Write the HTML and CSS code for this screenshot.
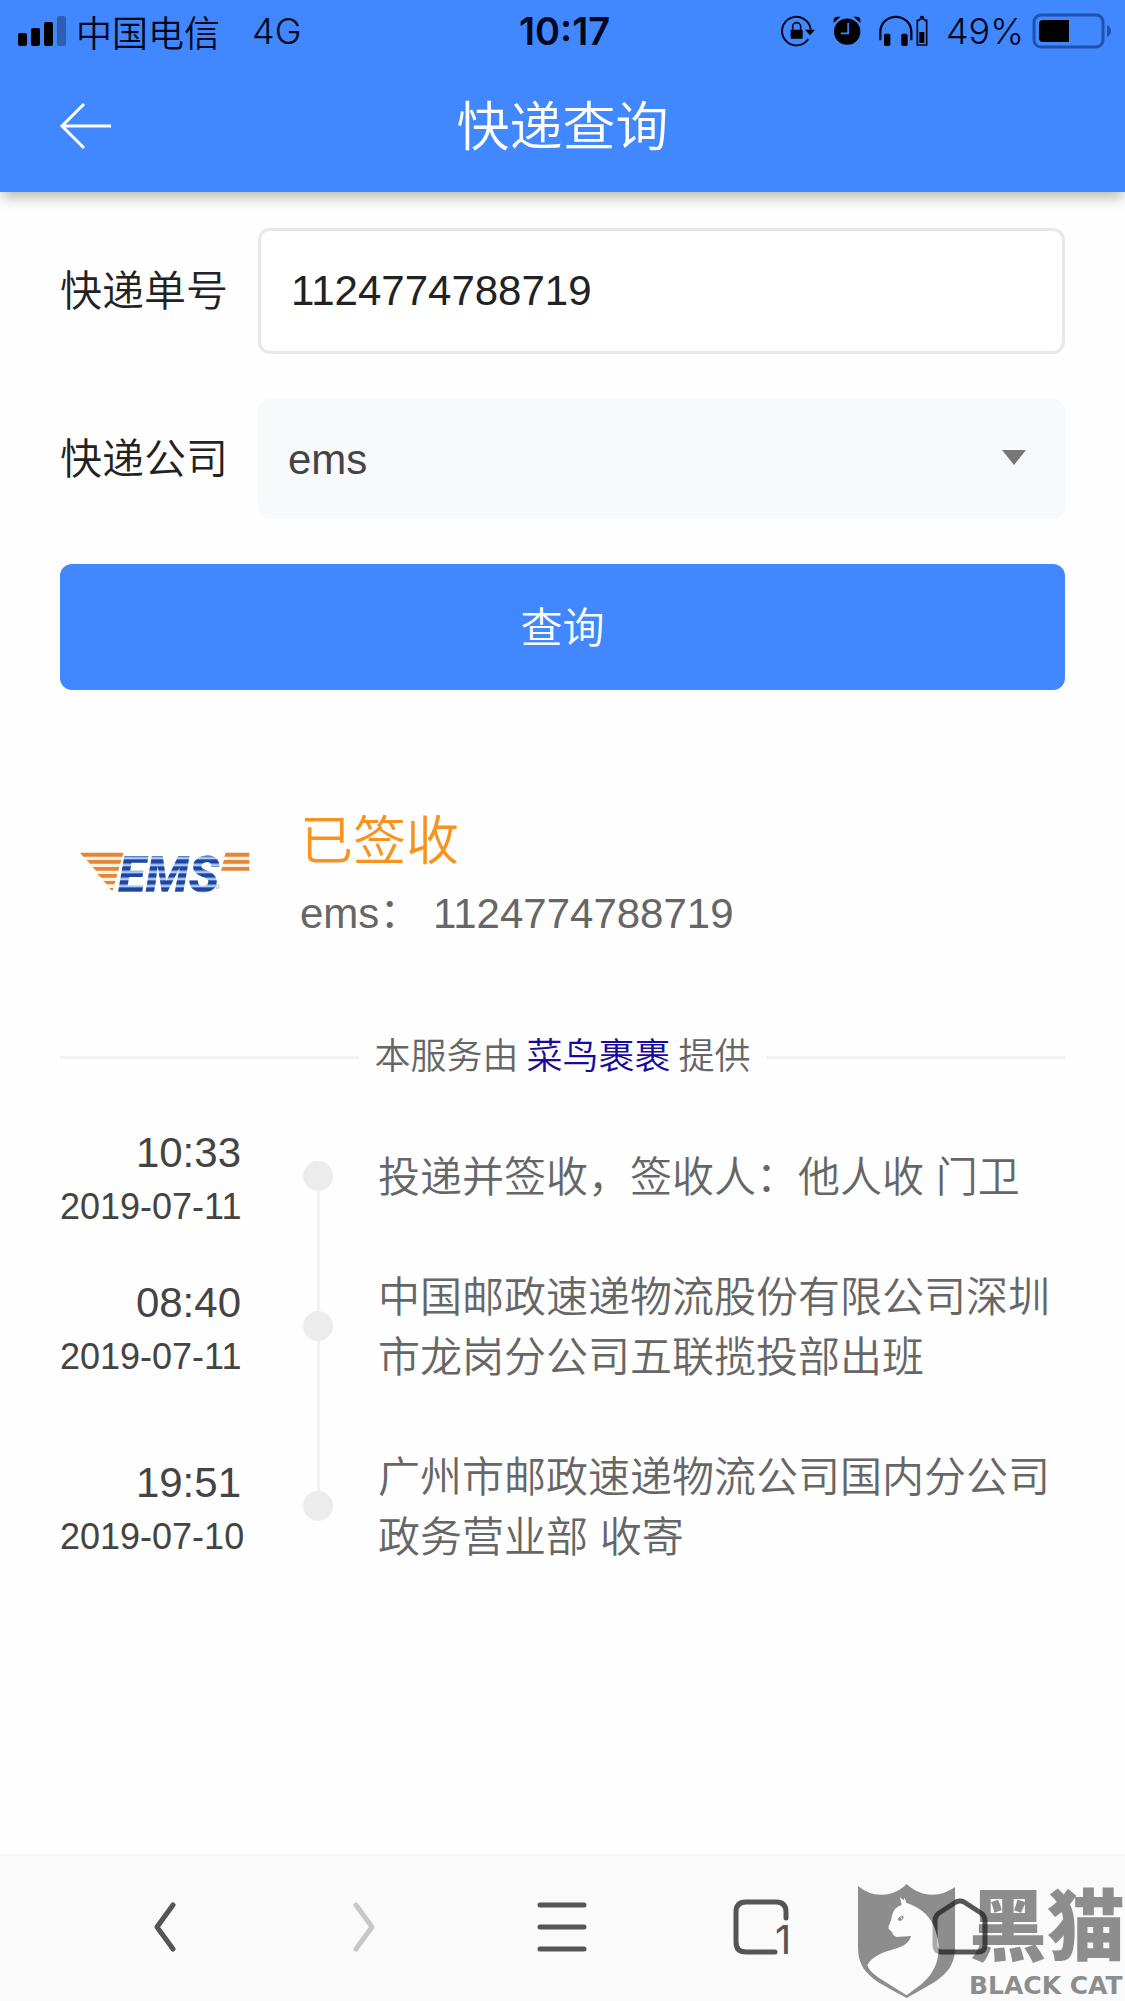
FILE: index.html
```html
<!DOCTYPE html>
<html lang="zh-CN">
<head>
    <meta charset="UTF-8">
    <meta name="viewport" content="width=device-width, initial-scale=1.0">
    <title>快递查询</title>
    <link rel="stylesheet" href="styles.css">
</head>
<body>
<header class="header">
    <div class="status">
        <div class="status-left">
            <svg width="48" height="30" viewBox="0 0 48 30">
                <rect x="0" y="17" width="9" height="13" rx="2"/>
                <rect x="13" y="12" width="9" height="18" rx="2"/>
                <rect x="26" y="6" width="9" height="24" rx="2"/>
                <rect x="39" y="0" width="9" height="30" rx="2" opacity="0.3"/>
            </svg>
            <span class="carrier">中国电信</span>
            <span class="network">4G</span>
        </div>
        <div class="clock">10:17</div>
        <div class="status-right">
            <!-- rotation lock -->
            <svg width="34" height="32" viewBox="115 42 102 96">
                <path d="M197 114A43 43 0 1 1 204 86" fill="none" stroke="#000820" stroke-width="6"/>
                <path d="M187 86h30l-15 17z"/>
                <rect x="144" y="86" width="36" height="27" rx="3"/>
                <path d="M150 88V77a12 12 0 0 1 24 0v11" fill="none" stroke="#000820" stroke-width="5"/>
            </svg>
            <!-- alarm -->
            <svg width="28" height="32" viewBox="278 42 85 96">
                <circle cx="321" cy="92" r="40"/>
                <path d="M280 66v-12q2-6 9-7h12zM361 66v-12q-2-6-9-7h-12z"/>
                <path d="M324 65v32h-22" fill="none" stroke="#4187ff" stroke-width="5"/>
            </svg>
            <!-- headphones with their own battery -->
            <svg width="49" height="32" viewBox="416 42 147 96">
                <path d="M420 118V92a46 44 0 0 1 93 0v26" fill="none" stroke="#000820" stroke-width="7"/>
                <rect x="431" y="98" width="19" height="37" rx="5"/>
                <rect x="483" y="98" width="19" height="37" rx="5"/>
                <path d="M531 58h5l3-4h12l3 4h5v74h-28z" fill="none" stroke="#000820" stroke-width="5"/>
                <path d="M538 51q1-7 7-7t7 7zM537 93h15v33h-15z"/>
            </svg>
            <div class="power">
                <span>49%</span>
                <svg width="78" height="34" viewBox="0 0 78 34">
                    <rect x="1" y="1" width="69" height="32" rx="7" fill="none" stroke="#1f52ab" stroke-width="3"/>
                    <path d="M74 11q4 2 4 6t-4 6z" fill="#1f52ab"/>
                    <path d="M10 6h26v22h-26q-4 0-4-4v-14q0-4 4-4z"/>
                </svg>
            </div>
        </div>
    </div>
    <div class="titlebar">
        <button type="button" class="back" aria-label="返回">
            <svg width="52" height="50" viewBox="0 0 52 50">
                <path d="M51 25H3M24 3L2 25l22 22" fill="none" stroke="#fff" stroke-width="3"/>
            </svg>
        </button>
        <h1>快递查询</h1>
    </div>
</header>

<main>
    <form class="query">
        <div class="field">
            <label for="number">快递单号</label>
            <input type="text" id="number" value="1124774788719">
        </div>
        <div class="field">
            <label for="company">快递公司</label>
            <div class="select-box">
                <select id="company">
                    <option>ems</option>
                </select>
            </div>
        </div>
        <button type="button" class="search">查询</button>
    </form>

    <section class="result">
        <svg class="logo" width="170" height="42" viewBox="120 214 510 126">
            <defs>
                <pattern id="blue" width="30" height="21" y="218" patternUnits="userSpaceOnUse">
                    <rect width="30" height="21" fill="#a9cbff"/>
                    <rect width="30" height="13" fill="#1f459c"/>
                </pattern>
            </defs>
            <path d="M120 219H250L217 335L205 322z" fill="#fff0e0"/>
            <path d="M558 219H628V273H543z" fill="#fff0e0"/>
            <g fill="#e0883a">
                <path d="M120 219H250L247 231H130zM140 241H244L241 252H150zM158 262H238L235 273H168zM172 283H232L229 294H184zM190 304H226L223 314H201zM208 325H220L217 334z"/>
                <path d="M557 219H628V231H553zM552 241H628V252H548zM547 262H628V273H543z"/>
            </g>
            <text class="logo-text" x="234" y="337" fill="url(#blue)">EMS</text>
            <circle cx="532" cy="321" r="5" fill="none" stroke="#a5acc8" stroke-width="3"/>
        </svg>
        <div>
            <h2>已签收</h2>
            <p>ems： 1124774788719</p>
        </div>
    </section>

    <p class="provider"><span>本服务由<a href="#">菜鸟裹裹</a>提供</span></p>

    <ol class="timeline">
        <li>
            <div class="when"><b>10:33</b><span>2019-07-11</span></div>
            <div class="dot"></div>
            <p>投递并签收，签收人：他人收 门卫</p>
        </li>
        <li>
            <div class="when"><b>08:40</b><span>2019-07-11</span></div>
            <div class="dot"></div>
            <p>中国邮政速递物流股份有限公司深圳市龙岗分公司五联揽投部出班</p>
        </li>
        <li>
            <div class="when"><b>19:51</b><span>2019-07-10</span></div>
            <div class="dot"></div>
            <p>广州市邮政速递物流公司国内分公司政务营业部 收寄</p>
        </li>
    </ol>
</main>

<nav class="toolbar">
    <button type="button" aria-label="后退">
        <svg width="58" height="58" viewBox="0 0 58 58"><path d="M37 7L21 29l16 22" class="line"/></svg>
    </button>
    <button type="button" aria-label="前进" disabled>
        <svg width="58" height="58" viewBox="0 0 58 58"><path d="M21 7l16 22l-16 22" class="line"/></svg>
    </button>
    <button type="button" aria-label="菜单">
        <svg width="58" height="58" viewBox="0 0 58 58"><path d="M7 7h44M7 29h44M7 51h44" class="line"/></svg>
    </button>
    <button type="button" aria-label="窗口">
        <svg width="58" height="58" viewBox="0 0 58 58">
            <path d="M54 20V14Q54 4 44 4H14Q4 4 4 14V44Q4 54 14 54H43" class="line"/>
            <text x="43" y="56" class="tab-count">1</text>
        </svg>
    </button>
    <button type="button" aria-label="主页">
        <svg width="58" height="58" viewBox="0 0 58 58"><path d="M25 4Q29 2 33 4L50 15Q54 18 54 23V47Q54 54 47 54H11Q4 54 4 47V23Q4 18 8 15z" class="line"/></svg>
    </button>
    <div class="watermark">
        <svg width="97" height="114" viewBox="108 109 291 342">
            <path d="M108 115Q150 150 205 138Q235 129 254 109Q275 130 305 138Q355 150 399 118V300C399 385 330 405 254 451C175 405 108 385 108 300z" fill="#222"/>
            <path d="M234 149L245 158L248 150L253 165C290 178 318 197 336 236C360 300 356 360 300 408L254 443L170 390Q140 370 136 352C150 325 185 313 210 306C245 298 262 285 267 265L224 268Q211 264 211 254L200 244Q197 236 203 228Q209 215 211 200Q217 179 239 172z" fill="#fff"/>
            <path d="M227 216Q233 202 245 206Q244 220 232 220z" fill="#222"/>
            <path d="M236 208l4 7" stroke="#fff" stroke-width="3"/>
        </svg>
        <div class="brand"><strong>黑猫</strong><span>BLACK CAT</span></div>
    </div>
</nav>
</body>
</html>
```
FILE: styles.css
```css
* {
    box-sizing: border-box;
}
body {
    margin: 0;
    min-height: 100vh;
    display: flex;
    flex-direction: column;
    background: #fefefe;
    color: #222;
    font-family: "Liberation Sans", "Noto Sans CJK SC", sans-serif;
    font-size: 42px;
    font-weight: 350;
}
h1, h2, p, ol {
    margin: 0;
    padding: 0;
    font-weight: 350;
}
svg {
    display: block;
    flex: none;
    overflow: visible;
}
button {
    border: none;
    padding: 0;
    background: none;
    font: inherit;
}

/* header */
.header {
    background: #4187ff;
    box-shadow: 0 8px 12px -2px rgba(70, 70, 50, 0.35);
}
.status {
    display: grid;
    grid-template-columns: 1fr auto 1fr;
    align-items: center;
    height: 62px;
    padding: 0 14px 0 18px;
    color: #000820;
    fill: #000;
    font-family: Inter, "Noto Sans CJK SC", sans-serif;
    font-size: 36px;
}
.status-left, .status-right, .power {
    display: flex;
    align-items: center;
}
.status-left {
    gap: 10px;
}
.network {
    margin-left: 22px;
}
.clock {
    font-size: 38px;
    font-weight: 600;
}
.status-right {
    justify-content: flex-end;
    gap: 18px;
}
.power {
    gap: 9px;
}
.titlebar {
    display: grid;
    grid-template-columns: 52px 1fr 52px;
    align-items: center;
    height: 130px;
    padding: 0 60px 2px;
}
.titlebar h1 {
    padding-bottom: 6px;
    color: #fff;
    font-size: 53px;
    text-align: center;
}

/* form */
main {
    padding: 36px 60px 0;
}
.query {
    display: flex;
    flex-direction: column;
    gap: 45px;
}
.field {
    display: flex;
    align-items: center;
}
.field label {
    width: 198px;
    flex: none;
    padding-bottom: 8px;
}
.field input, .field select {
    width: 100%;
    height: 120px;
    padding: 0 30px;
    border: none;
    border-radius: 12px;
    color: #222;
    background: #fff;
    font: inherit;
}
.field input {
    height: 126px;
    border: 3px solid #e8e8e8;
}
.field select {
    appearance: none;
    display: block;
    background: #f8f9fb;
    color: #444;
}
.select-box {
    flex: 1;
    position: relative;
}
.select-box::after {
    content: "";
    position: absolute;
    right: 39px;
    top: 51px;
    border: 12px solid transparent;
    border-top: 15px solid #777;
    border-bottom: none;
    pointer-events: none;
}
.search {
    height: 126px;
    padding-bottom: 6px;
    border-radius: 12px;
    background: #4187ff;
    color: #fff;
}

/* result */
.result {
    display: flex;
    align-items: center;
    gap: 50px;
    margin-top: 116px;
    padding-left: 20px;
    line-height: 72px;
    color: #666;
}
.result h2 {
    color: #f7931e;
    font-size: 53px;
}
.logo {
    margin-bottom: 12px;
}
.logo-text {
    font-family: "Liberation Sans Narrow", Roboto, sans-serif;
    font-size: 152px;
    font-weight: 900;
    font-style: italic;
}
.provider {
    display: flex;
    align-items: center;
    gap: 15px;
    margin-top: 80px;
    font-size: 36px;
    line-height: 54px;
    color: #666;
}
.provider::before, .provider::after {
    content: "";
    flex: 1;
    height: 3px;
    background: #f2f2f2;
}
.provider a {
    margin: 0 8px;
    color: #1a0a9c;
    text-decoration: none;
}

/* timeline */
.timeline {
    margin-top: 32px;
    list-style: none;
}
.timeline li {
    display: flex;
    align-items: center;
}
.when {
    width: 184px;
    flex: none;
    padding-top: 8px;
    line-height: 52px;
    color: #444;
}
.when b {
    display: block;
    padding-right: 3px;
    font-weight: 400;
    text-align: right;
}
.when span {
    font-size: 36px;
    white-space: nowrap;
}
.dot {
    align-self: stretch;
    flex: none;
    display: flex;
    align-items: center;
    width: 30px;
    margin: 0 45px 0 59px;
    background: linear-gradient(#f2f2f2, #f2f2f2) center / 3px 100% no-repeat;
}
.dot::before {
    content: "";
    width: 30px;
    height: 30px;
    border-radius: 50%;
    background: #ececec;
}
.timeline li:first-child .dot {
    background-position: bottom;
    background-size: 3px 50%;
}
.timeline li:last-child .dot {
    background-position: top;
    background-size: 3px 50%;
}
.timeline p {
    padding: 32px 0 28px;
    line-height: 60px;
    color: #666;
}

/* browser toolbar */
.toolbar {
    position: relative;
    display: flex;
    height: 147px;
    margin-top: auto;
    padding: 0 66px 4px;
    border-top: 2px solid #f5f5f5;
    background: #fafafa;
}
.toolbar button {
    flex: 1;
    display: flex;
    align-items: center;
    justify-content: center;
}
.line {
    fill: none;
    stroke: #555;
    stroke-width: 5px;
    stroke-linejoin: round;
    stroke-linecap: round;
}
.toolbar button:disabled .line {
    stroke: #c8c8c8;
}
.tab-count {
    fill: #555;
    font-family: Inter, sans-serif;
    font-size: 40px;
    font-weight: 400;
}
.watermark {
    position: absolute;
    right: 0;
    bottom: 1px;
    display: flex;
    gap: 14px;
    opacity: 0.5;
    color: #222;
    pointer-events: none;
}
.brand {
    display: flex;
    flex-direction: column;
    justify-content: flex-end;
}
.brand strong {
    font-size: 78px;
    font-weight: 900;
    line-height: 88px;
}
.brand span {
    font-family: "DejaVu Sans", sans-serif;
    font-size: 25px;
    font-weight: 700;
    line-height: 28px;
}
```
